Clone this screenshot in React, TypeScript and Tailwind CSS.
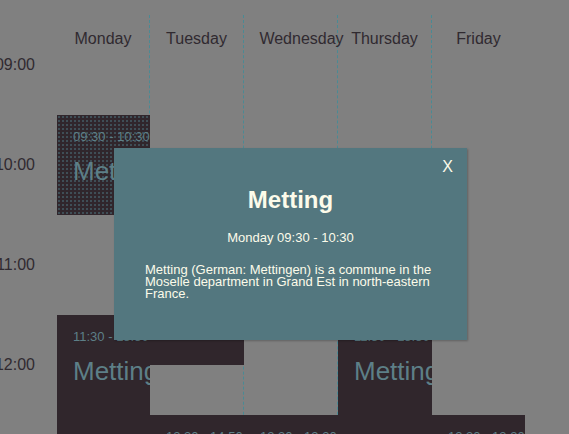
import { useState } from 'react';

type CalEvent = {
  day: number;
  start: string;
  end: string;
  title: string;
  selected?: boolean;
};

const days = ['Monday', 'Tuesday', 'Wednesday', 'Thursday', 'Friday'];
const hours = ['09:00', '10:00', '11:00', '12:00'];

const events: CalEvent[] = [
  { day: 0, start: '09:30', end: '10:30', title: 'Metting', selected: true },
  { day: 0, start: '11:30', end: '13:30', title: 'Metting' },
  { day: 1, start: '11:30', end: '12:00', title: 'Metting' },
  { day: 3, start: '11:30', end: '13:30', title: 'Metting' },
  { day: 1, start: '12:30', end: '14:50', title: 'Metting' },
  { day: 2, start: '12:30', end: '13:30', title: 'Metting' },
  { day: 4, start: '12:30', end: '13:30', title: 'Metting' },
];

// 100px per hour, day body starts at 09:00
const toPx = (t: string) => {
  const [h, m] = t.split(':').map(Number);
  return (h - 9) * 100 + (m / 60) * 100;
};

export default function App() {
  const [open, setOpen] = useState(true);

  return (
    <div className="relative h-[434px] w-[569px] overflow-hidden bg-[#808080] font-['Liberation_Sans',Arial,sans-serif]">
      {/* Calendar grid */}
      <div className="grid grid-cols-[57px_93px_94px_94px_94px_93px] pt-[15px]">
        {/* Time column */}
        <div className="flex flex-col">
          {hours.map((h) => (
            <div key={h} className="flex h-[100px] items-center justify-end pr-[22px] text-[16px] text-[#302a30]">
              {h}
            </div>
          ))}
        </div>

        {days.map((d, i) => (
          <div key={d} className={`flex flex-col ${i < 4 ? 'border-r border-dashed border-[#4a8a94]' : ''}`}>
            <div
              className={`flex h-[50px] items-center justify-center whitespace-nowrap pb-[2px] text-[16px] text-[#302a30] ${d === 'Wednesday' ? 'pl-[22px]' : ''}`}
            >
              {d}
            </div>
            <div className="relative h-[400px]">
              {events
                .filter((e) => e.day === i)
                .map((e) => {
                  const top = toPx(e.start);
                  const height = toPx(e.end) - top;
                  return (
                    <div
                      key={e.start + e.end}
                      className={`absolute left-0 overflow-hidden bg-[#30262c] pl-[16px] pt-[14px] text-[#5d7f87] ${i < 4 ? '-right-px' : 'right-0'} ${e.selected ? 'bg-[radial-gradient(#4f7d86_0.6px,transparent_0.8px)] bg-[length:4px_4px]' : ''}`}
                      style={{ top, height }}
                    >
                      {height >= 60 && (
                        <>
                          <div className="whitespace-nowrap text-[13px] leading-[15px]">
                            {e.start} - {e.end}
                          </div>
                          <div className="mt-[12px] whitespace-nowrap text-[26px] leading-[30px]">{e.title}</div>
                        </>
                      )}
                    </div>
                  );
                })}
            </div>
          </div>
        ))}
      </div>

      {/* Event details modal */}
      {open && (
        <div className="absolute left-[114px] top-[148px] h-[192px] w-[353px] bg-[#53777f] px-[31px] pt-[38px] text-[#fcfbea] shadow-[1px_1px_2px_rgba(0,0,0,0.25)]">
          <button
            onClick={() => setOpen(false)}
            className="absolute right-[14px] top-[9px] text-[16px] leading-[20px] text-[#fcfbea]"
          >
            X
          </button>
          <h2 className="text-center text-[24px] font-bold leading-[28px]">Metting</h2>
          <p className="mt-[16px] text-center text-[13px] leading-[15px]">Monday 09:30 - 10:30</p>
          <p className="mt-[19px] text-[13px] leading-[12px]">
            Metting (German: Mettingen) is a commune in the Moselle department in Grand Est in north-eastern France.
          </p>
        </div>
      )}
    </div>
  );
}
